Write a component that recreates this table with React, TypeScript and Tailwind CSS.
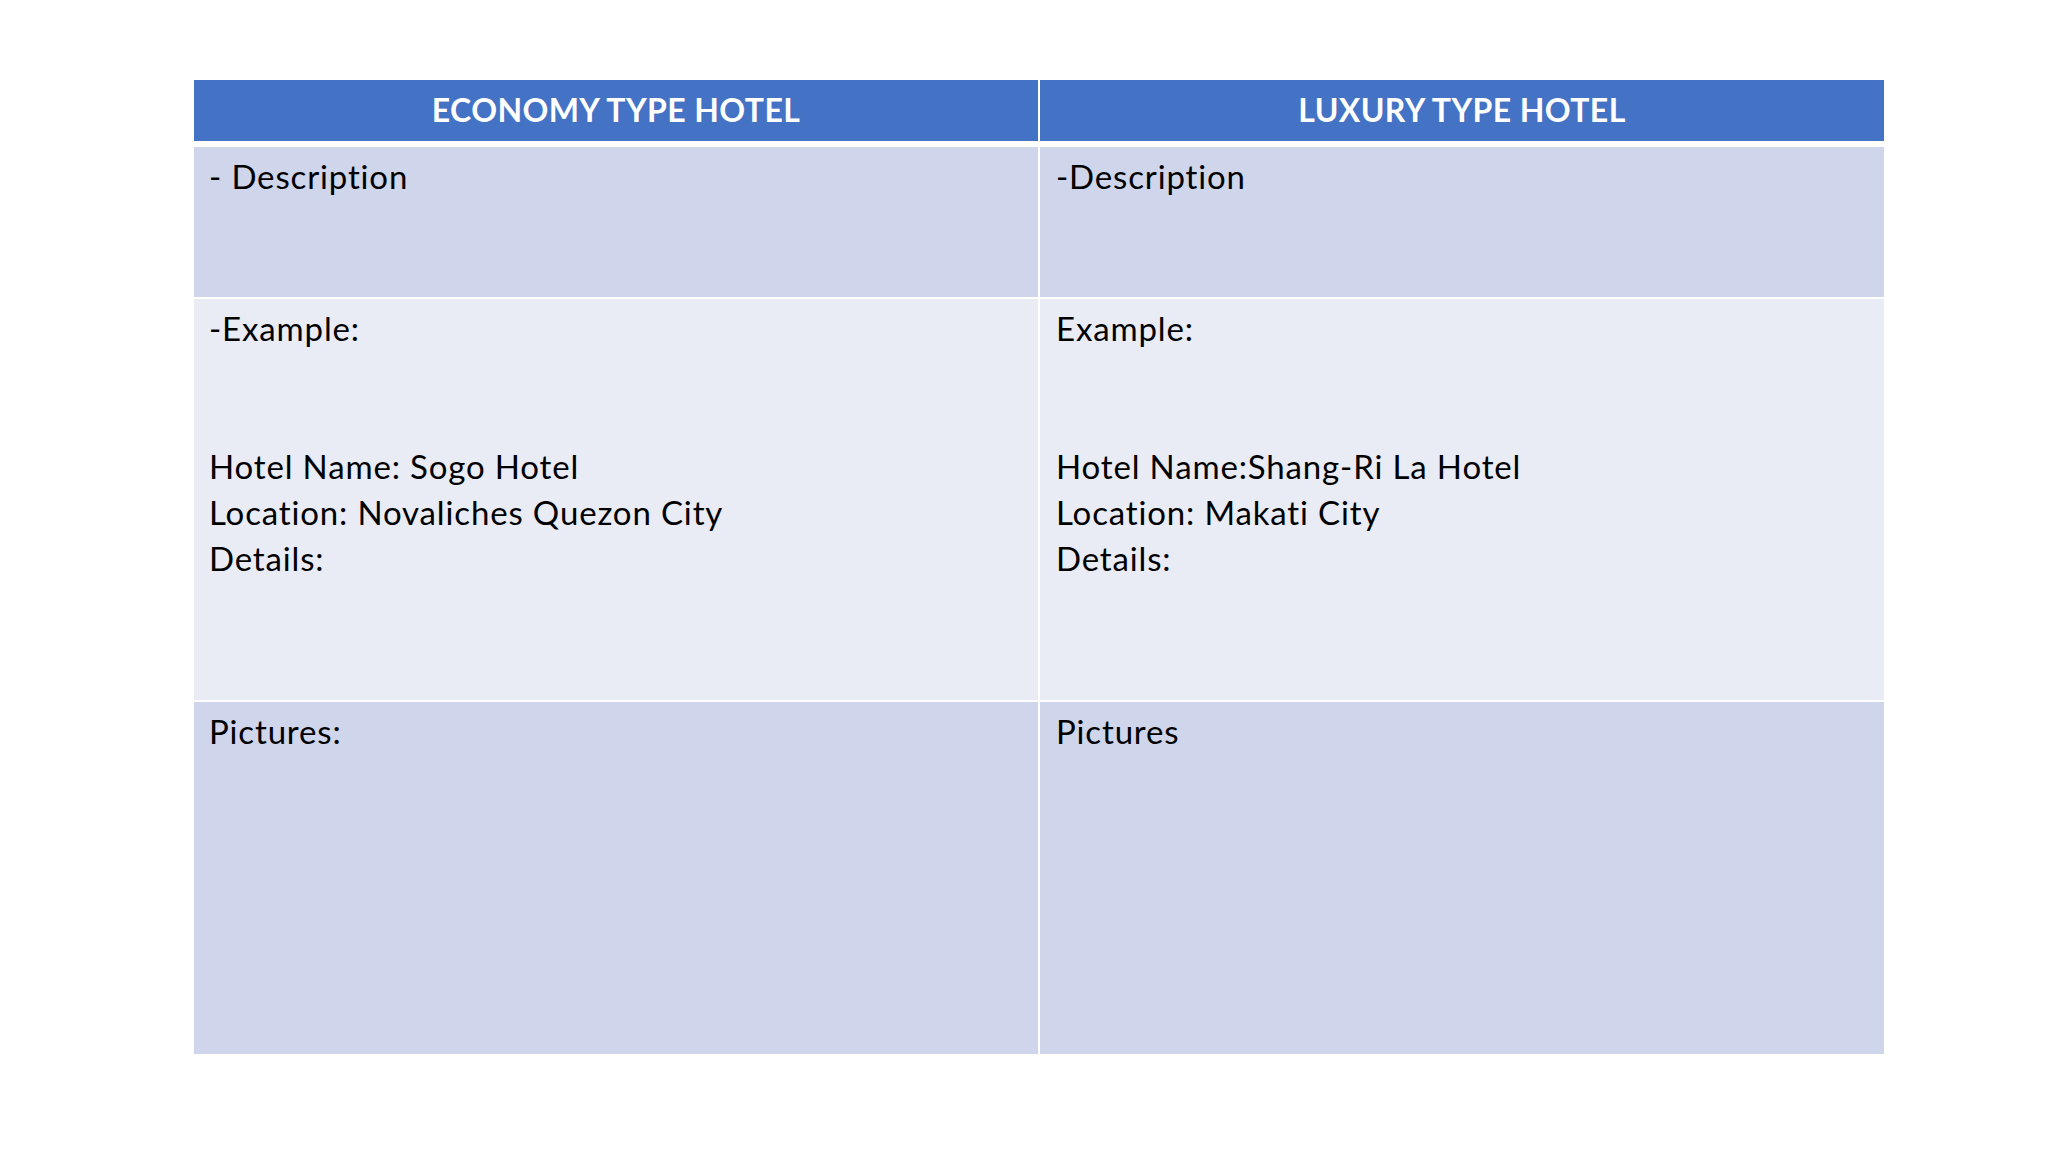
export default function App() {
  const font = { fontFamily: 'Lato, "Liberation Sans", sans-serif' }

  return (
    <div className="w-[2048px] h-[1152px] bg-white pt-[80px] pl-[194px]" style={font}>
      <div className="w-[1690px] flex flex-col">
        {/* header */}
        <div className="flex gap-[2px] h-[61px]">
          <div className="w-[844px] bg-[#4472c4] flex justify-center pt-[7px] text-white font-bold text-[32px] tracking-[0.4px] leading-[46px]">
            ECONOMY TYPE HOTEL
          </div>
          <div className="w-[844px] bg-[#4472c4] flex justify-center pt-[7px] text-white font-bold text-[32px] tracking-[0.4px] leading-[46px]">
            LUXURY TYPE HOTEL
          </div>
        </div>

        {/* description */}
        <div className="flex gap-[2px] h-[150px] mt-[6px]">
          <div className="w-[844px] bg-[#cfd5ea] pl-[15px] pt-[6px] text-black text-[33px] tracking-[0.85px] leading-[46px]">
            - Description
          </div>
          <div className="w-[844px] bg-[#cfd5ea] pl-[16px] pt-[6px] text-black text-[33px] tracking-[0.85px] leading-[46px]">
            -Description
          </div>
        </div>

        {/* example */}
        <div className="flex gap-[2px] h-[401px] mt-[2px]">
          <div className="w-[844px] bg-[#e9ebf5] pl-[15px] pt-[6px] text-black text-[33px] tracking-[0.85px] leading-[46px]">
            <div>-Example:</div>
            <div>&nbsp;</div>
            <div>&nbsp;</div>
            <div>Hotel Name: Sogo Hotel</div>
            <div>Location: Novaliches Quezon City</div>
            <div>Details:</div>
          </div>
          <div className="w-[844px] bg-[#e9ebf5] pl-[16px] pt-[6px] text-black text-[33px] tracking-[0.85px] leading-[46px]">
            <div>Example:</div>
            <div>&nbsp;</div>
            <div>&nbsp;</div>
            <div>Hotel Name:Shang-Ri La Hotel</div>
            <div>Location: Makati City</div>
            <div>Details:</div>
          </div>
        </div>

        {/* pictures */}
        <div className="flex gap-[2px] h-[352px] mt-[2px]">
          <div className="w-[844px] bg-[#cfd5ea] pl-[15px] pt-[6px] text-black text-[33px] tracking-[0.85px] leading-[46px]">
            Pictures:
          </div>
          <div className="w-[844px] bg-[#cfd5ea] pl-[16px] pt-[6px] text-black text-[33px] tracking-[0.85px] leading-[46px]">
            Pictures
          </div>
        </div>
      </div>
    </div>
  )
}
